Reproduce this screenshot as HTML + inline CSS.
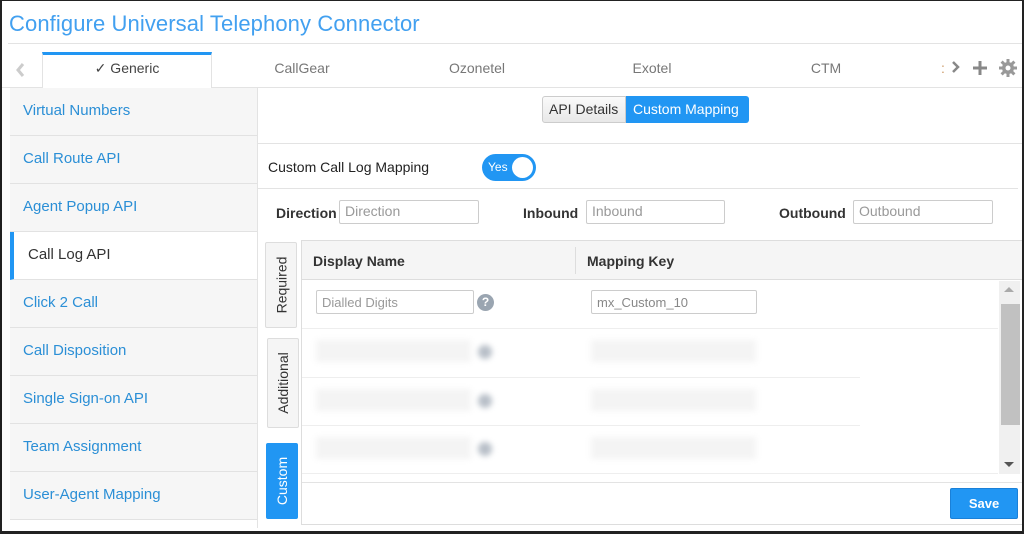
<!DOCTYPE html>
<html><head><meta charset="utf-8"><style>
*{box-sizing:border-box;margin:0;padding:0}
body{width:1024px;height:534px;position:relative;overflow:hidden;background:#fff;font-family:"Liberation Sans",sans-serif}
.a{position:absolute}
.frame{left:0;top:0;width:1024px;height:534px;border:2px solid #222;border-top-width:1px;border-bottom-width:3px;z-index:20;pointer-events:none}
.title{left:9px;top:11px;font-size:22px;color:#42a0f0;letter-spacing:0.1px}
.tab{top:60px;font-size:14px;color:#777;transform:translateX(-50%)}
.side{left:10px;width:247px;height:48px;background:#f6f6f6;border-bottom:1px solid #e2e2e2;color:#2b8fd6;font-size:15px;padding:14px 0 0 13px}
.lbl{font-size:14px;color:#333;font-weight:bold}
.inp{height:24px;border:1px solid #ccc;border-radius:2px;font-size:14px;color:#999;padding:2px 5px}
.vt{width:32px;border:1px solid #ddd;background:#f5f5f5;border-radius:2px;display:flex;align-items:center;justify-content:center}
.vt span{transform:rotate(-90deg);font-size:14px;color:#333;white-space:nowrap}
.blur{filter:blur(3px)}
</style></head><body>
<div class="a frame"></div>
<div class="a title">Configure Universal Telephony Connector</div>
<div class="a" style="left:8px;top:43px;width:1016px;height:1px;background:#e3e3e3"></div>
<svg class="a" style="left:15px;top:62px" width="12" height="16"><path d="M8 2l-5 6 5 6" stroke="#ccc" stroke-width="3" fill="none"/></svg>
<div class="a" style="left:42px;top:52px;width:170px;height:36px;border:1px solid #e3e3e3;border-top:3px solid #2196f3;border-bottom:none;background:#fff;z-index:2"></div>
<div class="a tab" style="left:127px;color:#444;z-index:3">✓ Generic</div>
<div class="a tab" style="left:302px">CallGear</div>
<div class="a tab" style="left:477px">Ozonetel</div>
<div class="a tab" style="left:652px">Exotel</div>
<div class="a tab" style="left:826px">CTM</div>
<div class="a" style="left:941px;top:60px;font-size:14px;color:#c96">:</div>
<svg class="a" style="left:950px;top:59px" width="72" height="20"><path d="M3 3l5 5-5 5" stroke="#888" stroke-width="2.5" fill="none"/><path d="M30 2v14M23 9h14" stroke="#888" stroke-width="3"/><g transform="translate(58,9)" fill="#999"><circle r="6"/><g stroke="#999" stroke-width="3"><path d="M0-9v18M-9 0h18M-6.4-6.4l12.8 12.8M6.4-6.4l-12.8 12.8"/></g><circle r="2.5" fill="#fff"/></g></svg>
<div class="a" style="left:0;top:87px;width:1024px;height:1px;background:#e3e3e3"></div>

<div class="a side" style="top:88px">Virtual Numbers</div>
<div class="a side" style="top:136px">Call Route API</div>
<div class="a side" style="top:184px">Agent Popup API</div>
<div class="a side" style="top:232px;background:#fff;color:#333;padding-left:14px;border-left:4px solid #2196f3">Call Log API</div>
<div class="a side" style="top:280px">Click 2 Call</div>
<div class="a side" style="top:328px">Call Disposition</div>
<div class="a side" style="top:376px">Single Sign-on API</div>
<div class="a side" style="top:424px">Team Assignment</div>
<div class="a side" style="top:472px">User-Agent Mapping</div>
<div class="a" style="left:257px;top:88px;width:1px;height:440px;background:#e3e3e3"></div>

<div class="a" style="left:542px;top:96px;width:84px;height:27px;border:1px solid #ccc;border-radius:3px 0 0 3px;background:linear-gradient(#fafafa,#e8e8e8);font-size:14px;color:#333;padding:4px 0 0 6px">API Details</div>
<div class="a" style="left:626px;top:96px;width:123px;height:27px;border-radius:0 3px 3px 0;background:#2196f3;font-size:14px;color:#fff;padding:5px 0 0 7px">Custom Mapping</div>
<div class="a" style="left:258px;top:143px;width:764px;height:1px;background:#e3e3e3"></div>
<div class="a lbl" style="left:268px;top:159px;font-weight:normal;color:#222;font-size:14px">Custom Call Log Mapping</div>
<div class="a" style="left:482px;top:154px;width:54px;height:27px;border-radius:14px;background:#2196f3"><span style="position:absolute;left:6px;top:6px;font-size:12px;color:#fff">Yes</span><div style="position:absolute;right:3px;top:3px;width:21px;height:21px;border-radius:50%;background:#fff"></div></div>
<div class="a" style="left:258px;top:188px;width:760px;height:1px;background:#e3e3e3"></div>
<div class="a lbl" style="left:276px;top:205px">Direction</div>
<div class="a inp" style="left:339px;top:200px;width:140px">Direction</div>
<div class="a lbl" style="left:523px;top:205px">Inbound</div>
<div class="a inp" style="left:586px;top:200px;width:139px">Inbound</div>
<div class="a lbl" style="left:779px;top:205px">Outbound</div>
<div class="a inp" style="left:853px;top:200px;width:140px">Outbound</div>

<div class="a vt" style="left:265px;top:242px;height:86px"><span>Required</span></div>
<div class="a vt" style="left:267px;top:338px;height:90px"><span>Additional</span></div>
<div class="a vt" style="left:266px;top:443px;height:76px;background:#2196f3;border-color:#2196f3"><span style="color:#fff">Custom</span></div>
<div class="a" style="left:301px;top:240px;width:721px;height:285px;border-left:1px solid #ddd;border-top:1px solid #ddd;border-bottom:1px solid #ddd"></div>
<div class="a" style="left:302px;top:241px;width:720px;height:39px;background:#f5f5f5;border-bottom:1px solid #ddd"></div>
<div class="a lbl" style="left:313px;top:253px">Display Name</div>
<div class="a" style="left:575px;top:247px;width:1px;height:27px;background:#ddd"></div>
<div class="a lbl" style="left:587px;top:253px">Mapping Key</div>
<div class="a inp" style="left:316px;top:290px;width:158px;font-size:13px;padding-top:4px">Dialled Digits</div>
<div class="a" style="left:477px;top:294px;width:17px;height:17px;border-radius:50%;background:#9aa5b1;color:#fff;font-size:12px;font-weight:bold;text-align:center;line-height:17px">?</div>
<div class="a inp" style="left:591px;top:290px;width:166px;font-size:13px;padding-top:4px;color:#888">mx_Custom_10</div>
<div class="a" style="left:302px;top:328px;width:696px;height:1px;background:#eee"></div>
<div class="a" style="left:302px;top:377px;width:558px;height:1px;background:#eee"></div>
<div class="a" style="left:302px;top:425px;width:558px;height:1px;background:#eee"></div>
<div class="a" style="left:302px;top:473px;width:696px;height:1px;background:#eee"></div>
<div class="a blur" style="left:316px;top:340px;width:155px;height:22px;background:#f4f4f4"></div>
<div class="a blur" style="left:316px;top:389px;width:155px;height:22px;background:#f4f4f4"></div>
<div class="a blur" style="left:316px;top:437px;width:155px;height:22px;background:#f4f4f4"></div>
<div class="a blur" style="left:478px;top:345px;width:14px;height:14px;border-radius:50%;background:#b8bfc8"></div>
<div class="a blur" style="left:478px;top:394px;width:14px;height:14px;border-radius:50%;background:#b8bfc8"></div>
<div class="a blur" style="left:478px;top:442px;width:14px;height:14px;border-radius:50%;background:#b8bfc8"></div>
<div class="a blur" style="left:591px;top:340px;width:165px;height:22px;background:#f4f4f4"></div>
<div class="a blur" style="left:591px;top:389px;width:165px;height:22px;background:#f4f4f4"></div>
<div class="a blur" style="left:591px;top:437px;width:165px;height:22px;background:#f4f4f4"></div>
<div class="a" style="left:999px;top:281px;width:21px;height:193px;background:#f0f0f0"></div>
<div class="a" style="left:1004px;top:287px;width:0;height:0;border-left:5px solid transparent;border-right:5px solid transparent;border-bottom:5px solid #aaa"></div>
<div class="a" style="left:1001px;top:304px;width:19px;height:121px;background:#c1c1c1"></div>
<div class="a" style="left:1004px;top:462px;width:0;height:0;border-left:5px solid transparent;border-right:5px solid transparent;border-top:5px solid #555"></div>
<div class="a" style="left:302px;top:482px;width:720px;height:1px;background:#e3e3e3"></div>
<div class="a" style="left:950px;top:488px;width:68px;height:31px;background:#2196f3;border:1px solid #1a80d8;border-radius:2px;color:#fff;font-size:13px;font-weight:bold;text-align:center;line-height:29px">Save</div>
</body></html>
